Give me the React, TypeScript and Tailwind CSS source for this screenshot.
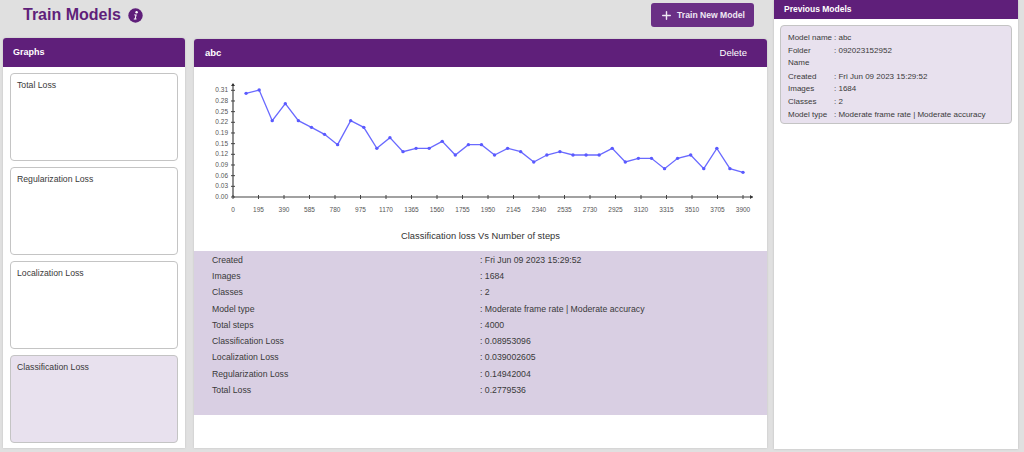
import { Plus } from 'lucide-react'

const purple = 'bg-[#5f1f7a]'

const graphs = ['Total Loss', 'Regularization Loss', 'Localization Loss', 'Classification Loss']

const details = [
    ['Created', 'Fri Jun 09 2023 15:29:52'],
    ['Images', '1684'],
    ['Classes', '2'],
    ['Model type', 'Moderate frame rate | Moderate accuracy'],
    ['Total steps', '4000'],
    ['Classification Loss', '0.08953096'],
    ['Localization Loss', '0.039002605'],
    ['Regularization Loss', '0.14942004'],
    ['Total Loss', '0.2779536'],
]

const prevModel = [
    ['Model name', 'abc'],
    ['Folder Name', '092023152952'],
    ['Created', 'Fri Jun 09 2023 15:29:52'],
    ['Images', '1684'],
    ['Classes', '2'],
    ['Model type', 'Moderate frame rate | Moderate accuracy'],
]

// pixel heights of the loss curve, read off the picture
const curve = [
    70, 60, 152, 101, 152, 172, 193, 224, 152, 172, 235, 203, 245, 235, 235, 214, 255, 224, 224, 255,
    235, 245, 276, 255, 245, 255, 255, 255, 235, 276, 265, 265, 296, 265, 255, 296, 235, 296, 307,
]

const yLabels = ['0.00', '0.03', '0.06', '0.09', '0.12', '0.15', '0.19', '0.22', '0.25', '0.28', '0.31']

function LossChart() {
    const x0 = 39
    const y0 = 130
    const stepX = 25.5
    const stepY = 10.67
    const points = curve.map((v, i) => [x0 + ((i + 1) * stepX) / 1.95, v / 3 + 3] as const)
    const xTicks = Array.from({ length: 21 }, (_, i) => i)

    return (
        <svg width="573" height="184" viewBox="0 0 573 184" className="block">
            <line x1={x0} y1={y0} x2={559} y2={y0} stroke="#444" strokeWidth="1.2" />
            <line x1={x0} y1={y0} x2={x0} y2={17} stroke="#444" strokeWidth="1.2" />
            <path d="M559 130l-3-2v4zM39 16l-2 3h4z" fill="#333" />
            {yLabels.map((label, i) => (
                <g key={label}>
                    <line x1={x0 - 2} x2={x0 + 2} y1={y0 - i * stepY} y2={y0 - i * stepY} stroke="#444" />
                    <text x={x0 - 5} y={y0 - i * stepY + 2} textAnchor="end" fontSize="6.5" fill="#555">
                        {label}
                    </text>
                </g>
            ))}
            {xTicks.map((i) => (
                <g key={i}>
                    <line x1={x0 + i * stepX} x2={x0 + i * stepX} y1={y0 - 2} y2={y0 + 2} stroke="#444" />
                    <text x={x0 + i * stepX} y={y0 + 15} textAnchor="middle" fontSize="6.5" fill="#555">
                        {i * 195}
                    </text>
                </g>
            ))}
            <polyline
                points={points.map((p) => p.join(',')).join(' ')}
                fill="none"
                stroke="#6a6aff"
                strokeWidth="1.3"
            />
            {points.map((p, i) => (
                <circle key={i} cx={p[0]} cy={p[1]} r="1.7" fill="#5a5aff" />
            ))}
            <text x="286.5" y="172" textAnchor="middle" fontSize="9.35" fill="#333">
                Classification loss Vs Number of steps
            </text>
        </svg>
    )
}

export default function App() {
    return (
        <div className="flex h-[452px] w-[1024px] overflow-hidden bg-[#e0e0e0] font-['Liberation_Sans',Arial,sans-serif] text-[#3a3a3a]">
            <div className="ml-[3px] flex w-[764px] flex-col">
                <div className="flex h-[38px] items-start justify-between pr-[13px]">
                    <div className="ml-5 mt-[7px] flex items-center gap-[7px]">
                        <h1 className="text-[16px] leading-[16px] font-bold text-[#5f1f7a]">Train Models</h1>
                        <svg width="15" height="15" viewBox="0 0 15 15">
                            <circle cx="7.5" cy="7.5" r="7.2" fill="#5f1f7a" />
                            <circle cx="8.6" cy="4.2" r="1.2" fill="#fff" />
                            <path d="M6 6.4h2.8l-1.1 4.2h.9l-.2.9H5.7l.2-.9h.8l.7-3.2h-.8z" fill="#fff" />
                        </svg>
                    </div>
                    <button className="mt-[3px] flex h-6 w-[103px] items-center justify-center gap-[4px] rounded-[3px] bg-[#6a2f85] text-[8.6px] font-bold text-[#f0e8f4]">
                        <Plus size={13} strokeWidth={2.6} />
                        Train New Model
                    </button>
                </div>
                <div className="flex gap-[9px]">
                    <div className="h-[410px] w-[182px] overflow-hidden rounded-t-[3px] bg-white shadow-[0_0_2px_#bbb]">
                        <div className={`${purple} flex h-[29px] items-center pl-[10px] text-[9px] font-bold text-white`}>Graphs</div>
                        <div className="flex flex-col gap-[6px] px-[7px] pt-[6px]">
                            {graphs.map((g, i) => (
                                <div
                                    key={g}
                                    className={`h-[88px] rounded-[4px] border-[1.5px] border-[#c4c4c4] pl-[6px] pt-[5px] text-[8.7px] leading-[12px] ${i === 3 ? 'bg-[#e8e1ee]' : 'bg-white'}`}
                                >
                                    {g}
                                </div>
                            ))}
                        </div>
                    </div>
                    <div className="mt-px h-[409px] w-[573px] overflow-hidden rounded-t-[3px] bg-white shadow-[0_0_2px_#bbb]">
                        <div className={`${purple} flex h-[28px] items-center justify-between pl-[11px] pr-[20px] text-white`}>
                            <span className="text-[9.5px] font-bold">abc</span>
                            <span className="text-[9.5px]">Delete</span>
                        </div>
                        <LossChart />
                        <div className="h-[164px] bg-[#d9cfe3] pt-[1px]">
                            {details.map(([k, v]) => (
                                <div key={k} className="flex h-[16.3px] items-center text-[8.7px]">
                                    <span className="ml-[18px] w-[268px]">{k}</span>
                                    <span>: {v}</span>
                                </div>
                            ))}
                        </div>
                    </div>
                </div>
            </div>
            <div className="ml-[7px] h-[449px] w-[244px] bg-white shadow-[0_0_2px_#bbb]">
                <div className={`${purple} flex h-[19px] items-center pl-[10px] text-[8.5px] font-bold text-white`}>Previous Models</div>
                <div className="mx-[6px] mt-[6px] h-[99px] rounded-[4px] border-[1.5px] border-[#c4c4c4] bg-[#e8e1ee] pl-[7px] pt-[5px] text-[8px]">
                    {prevModel.map(([k, v], i) => (
                        <div key={k} className={`flex ${i === 0 ? 'h-[13.5px] leading-[13px]' : i === 1 ? 'h-[25px] leading-[12.5px]' : 'h-[12.9px] leading-[13px]'}`}>
                            <span className="w-[46px] shrink-0">{k}</span>
                            <span>: {v}</span>
                        </div>
                    ))}
                </div>
            </div>
        </div>
    )
}
